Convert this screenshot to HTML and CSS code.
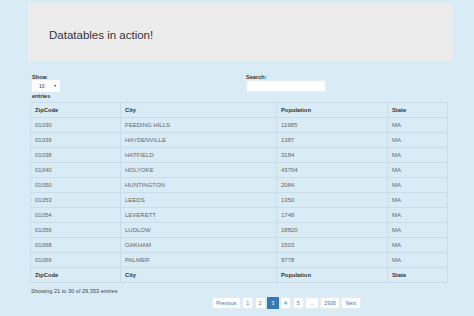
FILE: index.html
```html
<!DOCTYPE html>
<html>
<head>
<meta charset="utf-8">
<link rel="stylesheet" href="styles.css">
</head>
<body>
<div class="container">
  <div class="jumbotron">
    <h1 class="title">Datatables in action!</h1>
  </div>
  <div class="controls">
    <div class="length">
      <div class="lbl">Show</div>
      <div class="select"><span>10</span><span class="arrow">▼</span></div>
      <div class="lbl">entries</div>
    </div>
    <div class="search">
      <div class="lbl">Search:</div>
      <div class="input"></div>
    </div>
  </div>
  <table class="tbl">
    <thead>
      <tr><th class="c1">ZipCode</th><th class="c2">City</th><th class="c3">Population</th><th class="c4">State</th></tr>
    </thead>
    <tbody>
      <tr><td>01030</td><td>FEEDING HILLS</td><td>11985</td><td>MA</td></tr>
      <tr><td>01039</td><td>HAYDENVILLE</td><td>1387</td><td>MA</td></tr>
      <tr><td>01038</td><td>HATFIELD</td><td>3184</td><td>MA</td></tr>
      <tr><td>01040</td><td>HOLYOKE</td><td>43704</td><td>MA</td></tr>
      <tr><td>01050</td><td>HUNTINGTON</td><td>2084</td><td>MA</td></tr>
      <tr><td>01053</td><td>LEEDS</td><td>1350</td><td>MA</td></tr>
      <tr><td>01054</td><td>LEVERETT</td><td>1748</td><td>MA</td></tr>
      <tr><td>01056</td><td>LUDLOW</td><td>18820</td><td>MA</td></tr>
      <tr><td>01068</td><td>OAKHAM</td><td>1503</td><td>MA</td></tr>
      <tr><td>01069</td><td>PALMER</td><td>9778</td><td>MA</td></tr>
    </tbody>
    <tfoot>
      <tr><th>ZipCode</th><th>City</th><th>Population</th><th>State</th></tr>
    </tfoot>
  </table>
  <div class="info">Showing 21 to 30 of 29,353 entries</div>
  <div class="paging">
    <ul class="pagination">
      <li>Previous</li>
      <li>1</li>
      <li>2</li>
      <li class="active">3</li>
      <li>4</li>
      <li>5</li>
      <li>…</li>
      <li>2936</li>
      <li>Next</li>
    </ul>
  </div>
</div>
</body>
</html>
```
FILE: styles.css
```css
html, body {
  margin: 0;
  padding: 0;
  background: #d9ebf5;
  font-family: "Liberation Sans", Arial, sans-serif;
  color: #555;
  font-size: 5.6px;
}
.container {
  width: 425px;
  margin-left: 28px;
  padding-top: 3px;
}
.jumbotron {
  background: #ececec;
  height: 58px;
  border-radius: 2px;
  display: flex;
  align-items: center;
  padding-left: 21px;
}
.title {
  margin: 0;
  font-weight: normal;
  font-size: 11.5px;
  color: #333;
  line-height: 1;
  padding-top: 7px;
}
.controls {
  display: flex;
  margin-top: 13px;
  padding-left: 4px;
  height: 28px;
}
.length {
  width: 214px;
}
.lbl {
  font-weight: bold;
  color: #333;
  line-height: 6px;
  height: 6px;
}
.select {
  width: 28px;
  height: 12px;
  background: #fff;
  margin: 0 0 1px;
  box-sizing: border-box;
  display: flex;
  align-items: center;
  justify-content: space-between;
  padding: 0 3px 0 7px;
  color: #333;
  font-size: 5px;
}
.arrow {
  font-size: 3.5px;
}
.input {
  width: 80px;
  height: 12px;
  background: #fff;
  border: 1px solid #e3eef4;
  box-sizing: border-box;
}
.tbl {
  margin-left: 2px;
  width: 417px;
  border-collapse: collapse;
  table-layout: fixed;
  border: 1px solid #cadde8;
}
.tbl th, .tbl td {
  height: 15px;
  padding: 0 0 0 4px;
  border: 1px solid #cadde8;
  text-align: left;
  box-sizing: border-box;
  white-space: nowrap;
}
.tbl th {
  color: #333;
  font-weight: bold;
  font-size: 5.8px;
}
.tbl td {
  color: #666;
  font-size: 6px;
}
.c1 { width: 90px; }
.c2 { width: 156px; }
.c3 { width: 111px; }
.c4 { width: 60px; }
.info {
  margin-top: 5px;
  padding-left: 3px;
  color: #444;
}
.paging {
  margin-top: 3px;
  padding-left: 184px;
}
.pagination {
  list-style: none;
  margin: 0;
  padding: 0;
  display: flex;
  gap: 1.25px;
}
.pagination li {
  height: 12px;
  background: #fff;
  border: 1px solid #e2ecf2;
  box-sizing: border-box;
  padding: 0 3.25px;
  line-height: 10px;
  color: #337ab7;
  font-size: 5.2px;
}
.pagination li.active {
  background: #337ab7;
  border-color: #337ab7;
  color: #fff;
}
```
